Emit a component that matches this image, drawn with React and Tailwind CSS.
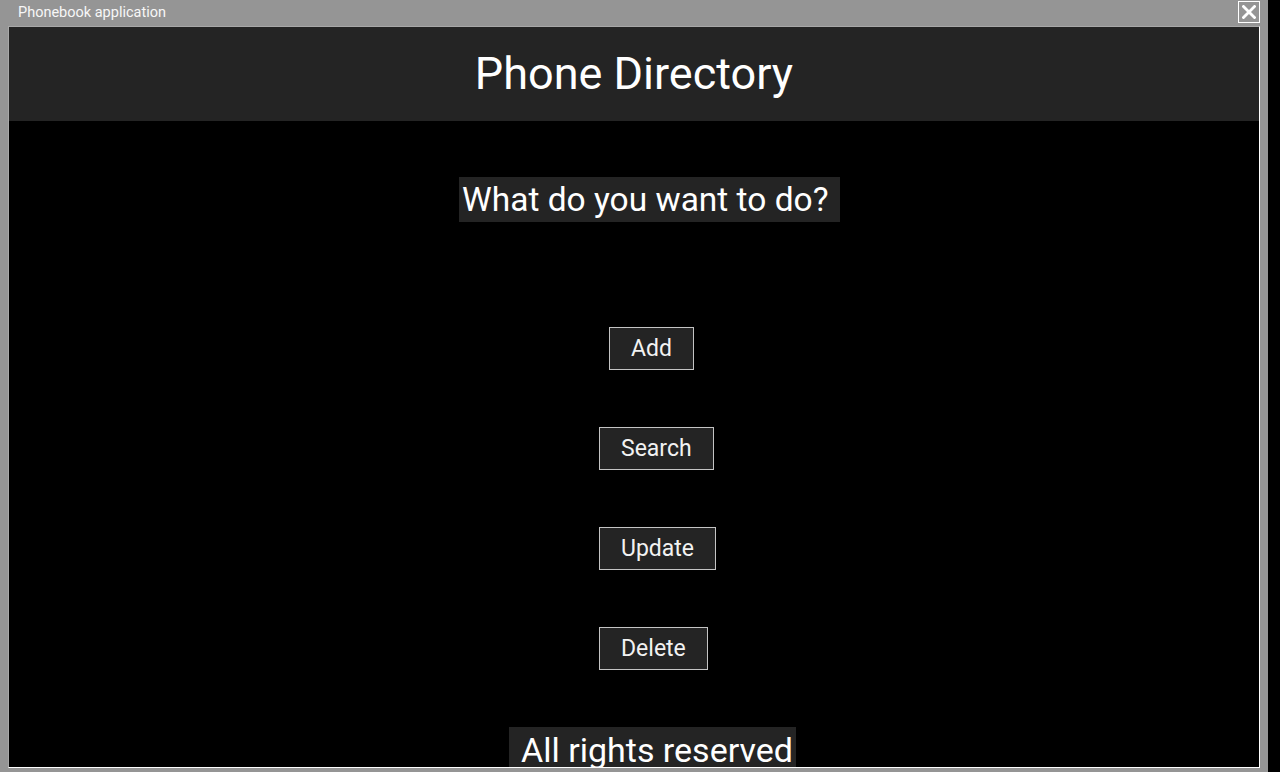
import React from "react";

const font = { fontFamily: "Roboto, 'Noto Sans', sans-serif" };

function Btn({ label, ml }) {
  return (
    <div
      className={`h-[43px] flex items-center justify-center px-[21px] border border-[#c4c4c4] bg-[#242424] text-[23px] text-[#f2f2f2] leading-none ${ml}`}
    >
      {label}
    </div>
  );
}

export default function App() {
  return (
    <div className="w-[1280px] h-[772px] bg-black overflow-hidden" style={font}>
      <div className="w-[1268px] h-[772px] bg-[#959595] flex flex-col">
        <div className="h-[26px] flex items-start shrink-0">
          <div className="pl-[18px] pt-[3px] text-[14.5px] leading-[19px] text-[#f7f7f7]">
            Phonebook application
          </div>
          <div className="ml-auto mr-[8px] mt-[1px] w-[22px] h-[22px] border border-white flex items-center justify-center">
            <svg width="14" height="14" viewBox="0 0 14 14">
              <path d="M1.5 1.5 L12.5 12.5 M12.5 1.5 L1.5 12.5" stroke="white" strokeWidth="2.8" strokeLinecap="square" />
            </svg>
          </div>
        </div>
        <div className="ml-[8px] w-[1252px] h-[742px] border-t border-l border-[#a8a8a8] border-r-white border-b-white border-r border-b bg-black overflow-hidden flex flex-col">
          <div className="h-[94px] shrink-0 bg-[#242424] flex items-center justify-center text-[45px] text-white leading-none pb-[2px]">
            Phone Directory
          </div>
          <div className="flex flex-col items-start">
            <div className="mt-[56px] ml-[450px] h-[45px] bg-[#242424] text-[33.5px] leading-none text-white flex items-center pl-[3px] pr-[11px]">
              What do you want to do?
            </div>
            <div className="mt-[105px]"><Btn label="Add" ml="ml-[600px]" /></div>
            <div className="mt-[57px]"><Btn label="Search" ml="ml-[590px]" /></div>
            <div className="mt-[57px]"><Btn label="Update" ml="ml-[590px]" /></div>
            <div className="mt-[57px]"><Btn label="Delete" ml="ml-[590px]" /></div>
            <div className="mt-[57px] ml-[500px] h-[45px] bg-[#242424] text-[34px] leading-none text-white flex items-center pl-[12px] pr-[3px]">
              All rights reserved
            </div>
          </div>
        </div>
      </div>
    </div>
  );
}
